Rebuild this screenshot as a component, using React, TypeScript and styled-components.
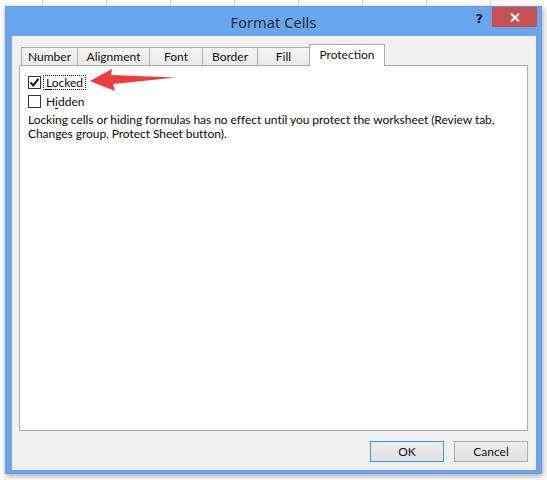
import React from "react";
import styled, { createGlobalStyle } from "styled-components";

const Global = createGlobalStyle`
  html, body { margin: 0; padding: 0; background: #ffffff; }
  body { font-family: Lato, "Noto Sans", sans-serif; }
  * { box-sizing: border-box; }
`;

const Page = styled.div`
  width: 547px;
  height: 480px;
  padding: 6px 0 0 5px;
  background-image: repeating-linear-gradient(
    to right,
    transparent 0 42px,
    #d6d6d6 42px 43px,
    transparent 43px 64px
  );
  background-size: 100% 6px;
  background-repeat: no-repeat;
`;

const Window = styled.div`
  width: 537px;
  height: 468px;
  display: flex;
  flex-direction: column;
  background: #6aa6f0;
  border: 1px solid #5e9be8;
  box-shadow: 1px 2px 6px rgba(0, 0, 0, 0.35);
`;

const TitleBar = styled.div`
  height: 29px;
  display: grid;
  grid-template-columns: 1fr auto 1fr;
  align-items: start;
`;

const Title = styled.div`
  grid-column: 2;
  padding-top: 5px;
  font-family: "Noto Sans", sans-serif;
  font-size: 14.5px;
  color: #2b2b2b;
  letter-spacing: 0.1px;
`;

const Controls = styled.div`
  grid-column: 3;
  justify-self: end;
  display: flex;
  align-items: flex-start;
  gap: 9px;
  margin-right: 4px;
`;

const HelpGlyph = styled.div`
  margin-top: 4px;
  font-size: 13px;
  font-weight: 700;
  color: #1e1e1e;
  font-family: "DejaVu Sans", sans-serif;
`;

const CloseButton = styled.div`
  width: 45px;
  height: 20px;
  background: #c75050;
  display: flex;
  align-items: center;
  justify-content: center;
`;

const Client = styled.div`
  flex: 1;
  margin: 0 5px 3px 6px;
  background: #f0f0f0;
  padding: 8px 8px 8px 7px;
  display: flex;
  flex-direction: column;
`;

const TabStrip = styled.div`
  height: 22px;
  margin: 0 0 -1px 2px;
  display: flex;
  align-items: flex-end;
  position: relative;
  z-index: 1;
`;

const Tab = styled.div<{ $w: number; $active?: boolean }>`
  width: ${(p) => p.$w}px;
  height: ${(p) => (p.$active ? 22 : 18)}px;
  margin-bottom: ${(p) => (p.$active ? 0 : 1)}px;
  margin-left: -1px;
  &:first-child { margin-left: 0; }
  border: 1px solid #acacac;
  border-bottom: none;
  background: ${(p) =>
    p.$active ? "#ffffff" : "linear-gradient(#f3f3f3, #eaeaea)"};
  display: flex;
  align-items: center;
  justify-content: center;
  padding-bottom: ${(p) => (p.$active ? 3 : 1)}px;
  font-size: 12px;
  color: #111111;
  position: relative;
  z-index: ${(p) => (p.$active ? 2 : 1)};
`;

const Panel = styled.div`
  flex: 1;
  background: #ffffff;
  border: 1px solid #acacac;
  padding: 9px 8px 0 8px;
  position: relative;
  font-size: 12px;
  color: #0a0a0a;
`;

const CheckRow = styled.div`
  height: 15px;
  display: flex;
  align-items: center;
  margin-bottom: 4px;
`;

const Box = styled.div`
  width: 13px;
  height: 13px;
  border: 1px solid #333333;
  background: #ffffff;
  display: flex;
  align-items: center;
  justify-content: center;
`;

const Label = styled.span<{ $focused?: boolean }>`
  margin-left: 2px;
  padding: 0 2px;
  height: 15px;
  line-height: 13px;
  border: 1px dotted ${(p) => (p.$focused ? "#222222" : "transparent")};
`;

const Key = styled.span`
  text-decoration: underline;
  text-underline-offset: 2px;
`;

const Note = styled.div`
  margin-top: 1px;
  line-height: 14px;
  letter-spacing: -0.05px;
`;

const NoteLine = styled.div`
  white-space: nowrap;
`;

const Callout = styled.svg`
  position: absolute;
  left: 68px;
  top: 1px;
`;

const ButtonRow = styled.div`
  margin-top: 10px;
  display: flex;
  justify-content: flex-end;
  gap: 10px;
`;

const DialogButton = styled.div<{ $default?: boolean }>`
  width: 74px;
  height: 21px;
  border: 1px solid ${(p) => (p.$default ? "#3399ff" : "#adadad")};
  background: linear-gradient(#ececec, #e2e2e2);
  display: flex;
  align-items: center;
  justify-content: center;
  font-size: 12px;
  color: #111111;
`;

const tabs: { label: string; w: number; active?: boolean }[] = [
  { label: "Number", w: 57 },
  { label: "Alignment", w: 73 },
  { label: "Font", w: 54 },
  { label: "Border", w: 56 },
  { label: "Fill", w: 53 },
  { label: "Protection", w: 76, active: true },
];

export default function App() {
  return (
    <>
      <Global />
      <Page>
        <Window>
          <TitleBar>
            <Title>Format Cells</Title>
            <Controls>
              <HelpGlyph>?</HelpGlyph>
              <CloseButton>
                <svg width="10" height="9" viewBox="0 0 10 9">
                  <path
                    d="M1 0.5 L9 8.5 M9 0.5 L1 8.5"
                    stroke="#ffffff"
                    strokeWidth="2"
                  />
                </svg>
              </CloseButton>
            </Controls>
          </TitleBar>
          <Client>
            <TabStrip>
              {tabs.map((t) => (
                <Tab key={t.label} $w={t.w} $active={t.active}>
                  {t.label}
                </Tab>
              ))}
            </TabStrip>
            <Panel>
              <CheckRow>
                <Box>
                  <svg width="11" height="11" viewBox="0 0 11 11">
                    <path
                      d="M1.5 5.5 L4.2 8.4 L9.5 1.8"
                      fill="none"
                      stroke="#111111"
                      strokeWidth="2"
                    />
                  </svg>
                </Box>
                <Label $focused>
                  <Key>L</Key>ocked
                </Label>
              </CheckRow>
              <CheckRow>
                <Box />
                <Label>
                  H<Key>i</Key>dden
                </Label>
              </CheckRow>
              <Note>
                <NoteLine>
                  Locking cells or hiding formulas has no effect until you
                  protect the worksheet (Review tab,
                </NoteLine>
                <NoteLine>Changes group, Protect Sheet button).</NoteLine>
              </Note>
              <Callout width="90" height="28" viewBox="0 0 90 28">
                <polygon
                  points="2,14 24,2 23,8 88,10.5 25,17 27,24"
                  fill="#ee3b3b"
                />
              </Callout>
            </Panel>
            <ButtonRow>
              <DialogButton $default>OK</DialogButton>
              <DialogButton>Cancel</DialogButton>
            </ButtonRow>
          </Client>
        </Window>
      </Page>
    </>
  );
}
